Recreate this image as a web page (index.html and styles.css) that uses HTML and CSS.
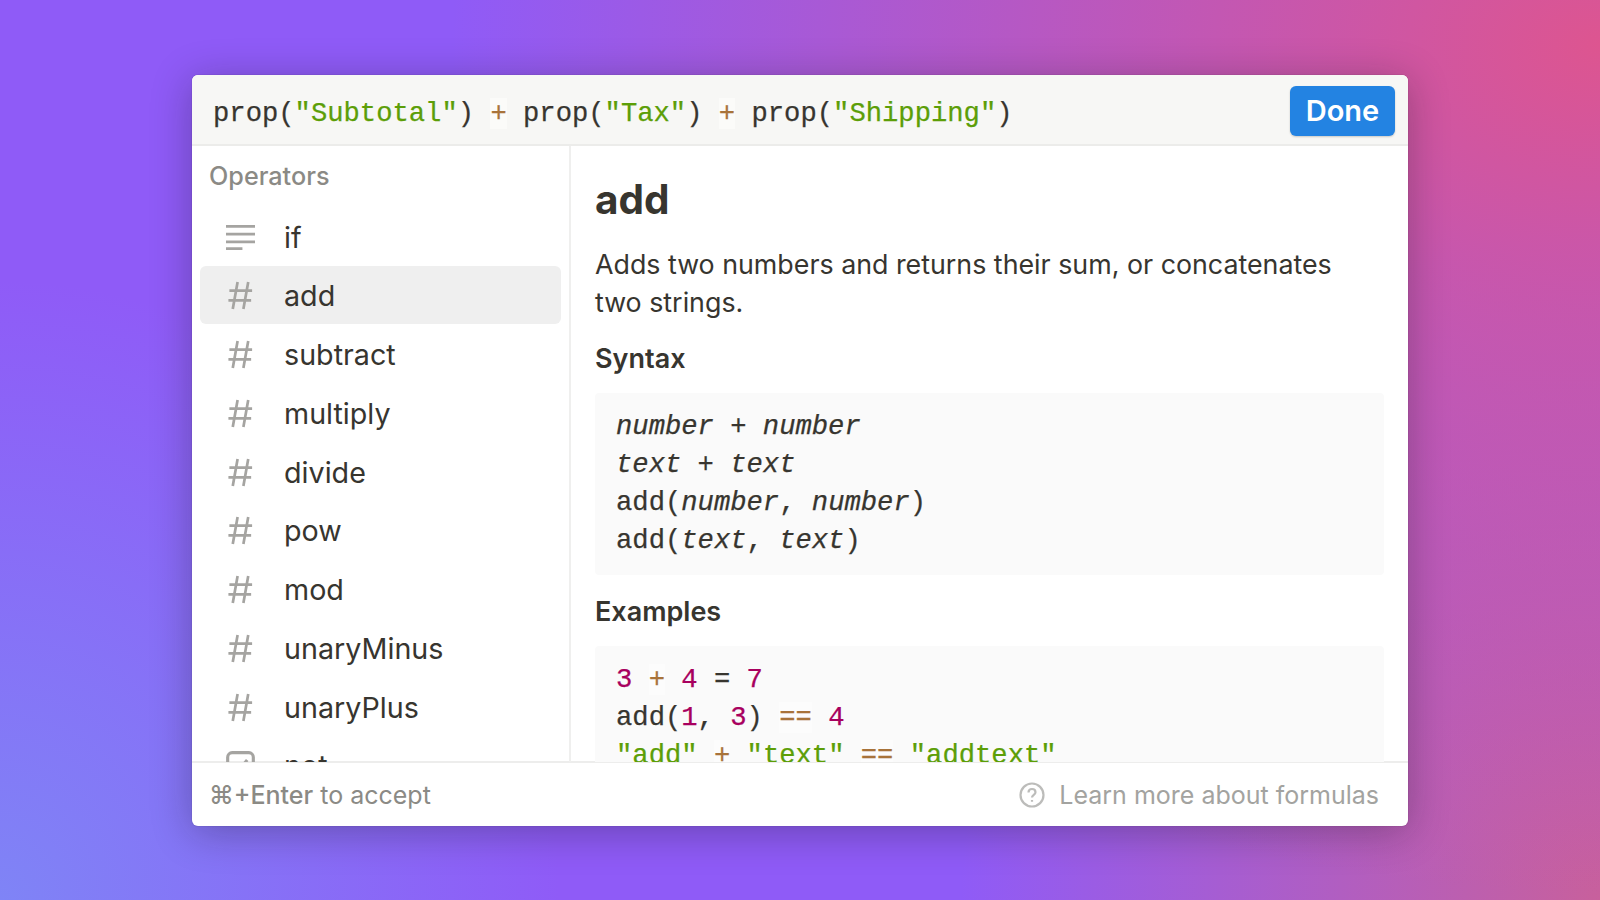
FILE: index.html
```html
<html>
<head>
  <title>Formula editor</title>
  <link rel="stylesheet" href="styles.css">
</head>
<body>
  <div class="modal">
    <div class="header">
      <div class="formula code">prop(<span class="str">"Subtotal"</span>) <span class="op">+</span> prop(<span class="str">"Tax"</span>) <span class="op">+</span> prop(<span class="str">"Shipping"</span>)</div>
      <button class="done">Done</button>
    </div>
    <div class="main">
      <div class="sidebar">
        <div class="groupTitle">Operators</div>
        <ul class="items">
          <li class="item">
            <svg class="icon" viewBox="0 0 30 26"><path d="M0 1.5h30M0 9.5h30M0 17.5h30M0 24.5h17"/></svg>
            <span>if</span>
          </li>
          <li class="item selected">
            <svg class="icon" viewBox="0 0 26 30"><path d="M10 1L5 29M21 1L16 29M1.5 10h23.5M0.5 20h23.5"/></svg>
            <span>add</span>
          </li>
          <li class="item">
            <svg class="icon" viewBox="0 0 26 30"><path d="M10 1L5 29M21 1L16 29M1.5 10h23.5M0.5 20h23.5"/></svg>
            <span>subtract</span>
          </li>
          <li class="item">
            <svg class="icon" viewBox="0 0 26 30"><path d="M10 1L5 29M21 1L16 29M1.5 10h23.5M0.5 20h23.5"/></svg>
            <span>multiply</span>
          </li>
          <li class="item">
            <svg class="icon" viewBox="0 0 26 30"><path d="M10 1L5 29M21 1L16 29M1.5 10h23.5M0.5 20h23.5"/></svg>
            <span>divide</span>
          </li>
          <li class="item">
            <svg class="icon" viewBox="0 0 26 30"><path d="M10 1L5 29M21 1L16 29M1.5 10h23.5M0.5 20h23.5"/></svg>
            <span>pow</span>
          </li>
          <li class="item">
            <svg class="icon" viewBox="0 0 26 30"><path d="M10 1L5 29M21 1L16 29M1.5 10h23.5M0.5 20h23.5"/></svg>
            <span>mod</span>
          </li>
          <li class="item">
            <svg class="icon" viewBox="0 0 26 30"><path d="M10 1L5 29M21 1L16 29M1.5 10h23.5M0.5 20h23.5"/></svg>
            <span>unaryMinus</span>
          </li>
          <li class="item">
            <svg class="icon" viewBox="0 0 26 30"><path d="M10 1L5 29M21 1L16 29M1.5 10h23.5M0.5 20h23.5"/></svg>
            <span>unaryPlus</span>
          </li>
          <li class="item">
            <svg class="icon" viewBox="0 0 26 26"><rect x="1.5" y="1.5" width="23" height="23" rx="4"/><path d="M7 13l4 5 8-10"/></svg>
            <span>not</span>
          </li>
        </ul>
      </div>
      <div class="details">
        <h1>add</h1>
        <p>Adds two numbers and returns their sum, or concatenates two strings.</p>
        <h2>Syntax</h2>
        <div class="block code">
          <div><i>number</i> + <i>number</i></div>
          <div><i>text</i> + <i>text</i></div>
          <div>add(<i>number</i>, <i>number</i>)</div>
          <div>add(<i>text</i>, <i>text</i>)</div>
        </div>
        <h2 class="second">Examples</h2>
        <div class="block code">
          <div><span class="num">3</span> <span class="op">+</span> <span class="num">4</span> = <span class="num">7</span></div>
          <div>add(<span class="num">1</span>, <span class="num">3</span>) <span class="op">==</span> <span class="num">4</span></div>
          <div><span class="str">"add"</span> <span class="op">+</span> <span class="str">"text"</span> <span class="op">==</span> <span class="str">"addtext"</span></div>
        </div>
      </div>
    </div>
    <div class="footer">
      <div class="hint"><b>⌘+Enter</b> to accept</div>
      <div class="learn">
        <svg class="help" viewBox="0 0 26 26"><circle cx="13" cy="13" r="11.5"/><path d="M9.5 10.5c0-2.2 1.5-3.5 3.5-3.5s3.5 1.3 3.5 3.2c0 2.6-3.5 2.6-3.5 5.3M13 18v1.8"/></svg>
        <span>Learn more about formulas</span>
      </div>
    </div>
  </div>
</body>
</html>
```

FILE: styles.css
```css
* {
  box-sizing: border-box;
}
html, body {
  height: 100%;
}
body {
  margin: 0;
  display: flex;
  align-items: center;
  justify-content: center;
  font-family: "Inter", sans-serif;
  color: #37352f;
  background-color: #8f5bf7;
  background-image:
    radial-gradient(ellipse 1150px 850px at 100% 5%, #dd5590 0%, rgba(221, 85, 144, 0.7) 30%, rgba(221, 85, 144, 0) 100%),
    radial-gradient(ellipse 640px 660px at 100% 100%, #c8609c 0%, rgba(200, 96, 156, 0) 100%),
    radial-gradient(ellipse 560px 620px at 0% 100%, #7f84f6 0%, rgba(127, 132, 246, 0) 100%);
}
.modal {
  width: 1216px;
  height: 751px;
  background: #fff;
  border-radius: 6px;
  overflow: hidden;
  display: flex;
  flex-direction: column;
  box-shadow: 0 0 0 1px rgba(15, 15, 15, 0.05), 0 6px 40px rgba(15, 15, 15, 0.3);
}
.code {
  font-family: "Liberation Mono", monospace;
  font-size: 27.2px;
  -webkit-text-stroke: 0.25px;
}
.str {
  color: #5c9e07;
}
.num {
  color: #a8005e;
}
.op {
  color: #a8733a;
  background: rgba(255, 255, 255, 0.45);
}
.header {
  height: 71px;
  flex-shrink: 0;
  display: flex;
  align-items: center;
  justify-content: space-between;
  padding: 0 13px 0 21px;
  background: #f7f7f5;
  border-bottom: 2px solid #ececea;
}
.formula {
  padding-top: 9px;
  white-space: pre;
}
.done {
  width: 105px;
  height: 50px;
  margin-top: 3px;
  border: 0;
  border-radius: 6px;
  background: #2383e2;
  color: #fff;
  font-family: inherit;
  font-size: 29px;
  font-weight: 600;
  box-shadow: 0 1px 2px rgba(15, 15, 15, 0.2);
}
.main {
  flex: 1;
  min-height: 0;
  margin-bottom: -1px;
  display: flex;
  overflow: hidden;
  position: relative;
  z-index: 1;
}
.sidebar {
  width: 379px;
  flex-shrink: 0;
  padding: 0 8px;
  border-right: 2px solid #efefee;
}
.groupTitle {
  padding: 15px 9px 0;
  height: 61.5px;
  font-size: 25.2px;
  line-height: 30px;
  font-weight: 500;
  color: #8b8a85;
}
.items {
  list-style: none;
  margin: 0;
  padding: 0;
  display: flex;
  flex-direction: column;
  gap: 0.75px;
}
.item {
  height: 58px;
  flex-shrink: 0;
  display: flex;
  align-items: center;
  padding: 2px 0 0 26px;
  border-radius: 6px;
  font-size: 28.7px;
}
.item.selected {
  background: #efefef;
}
.icon {
  width: 29px;
  height: 29px;
  margin-right: 29px;
  fill: none;
  stroke: #a5a4a1;
  stroke-width: 2.8;
}
.details {
  flex: 1;
  padding: 27px 24px 0 24px;
  overflow: hidden;
}
h1 {
  margin: 0;
  font-size: 40.5px;
  line-height: 54px;
  font-weight: 700;
}
p {
  margin: 18px 0 0;
  font-size: 26.8px;
  line-height: 38px;
}
h2 {
  margin: 17px 0 14px;
  padding-top: 1px;
  font-size: 27px;
  line-height: 40px;
  font-weight: 600;
}
h2.second {
  margin-top: 16px;
}
.block {
  padding: 15px 21px;
  background: #fafafa;
  border-radius: 4px;
  line-height: 38px;
}
.footer {
  height: 65px;
  flex-shrink: 0;
  display: flex;
  align-items: center;
  justify-content: space-between;
  padding: 2px 29px 0 17px;
  border-top: 2px solid #ededec;
  font-size: 25px;
}
.hint {
  color: #8b8a85;
}
.hint b {
  font-weight: 500;
}
.learn {
  display: flex;
  align-items: center;
  gap: 14px;
  color: #a3a3a0;
}
.help {
  width: 26px;
  height: 26px;
  fill: none;
  stroke: #bcbcba;
  stroke-width: 2.2;
}
```
